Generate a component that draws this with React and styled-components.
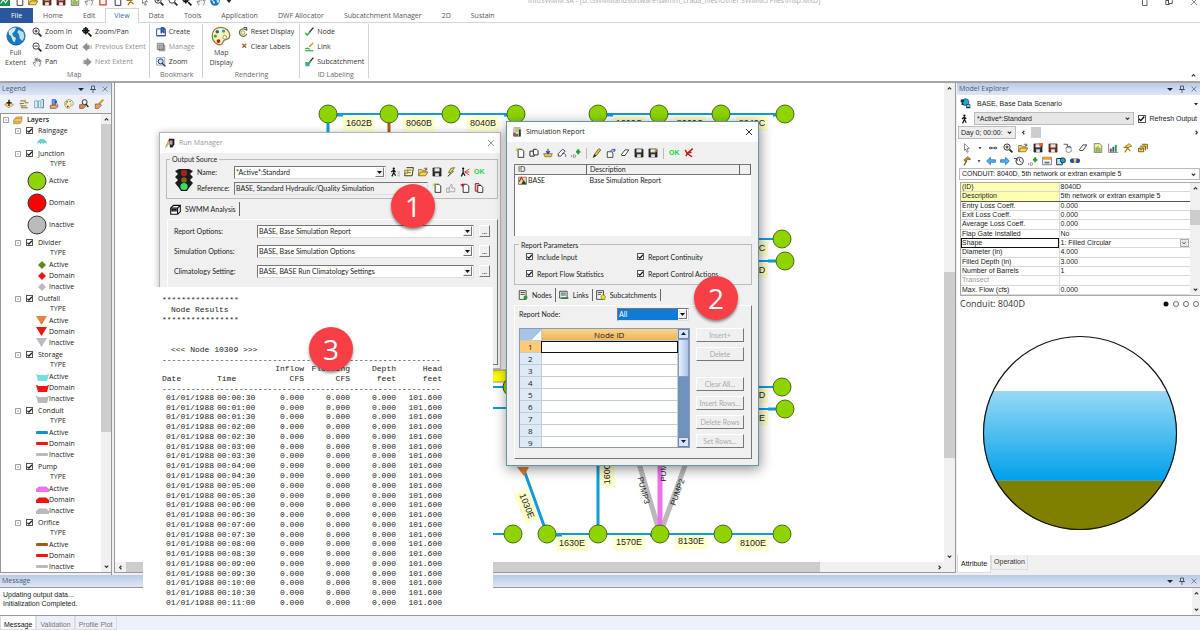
import React from "react";
import styled, { createGlobalStyle, css } from "styled-components";

const ui = '"Open Sans", "Noto Sans", sans-serif';
const arial = '"Liberation Sans", Arial, sans-serif';
const dialog = '"Lato", "Liberation Sans", sans-serif';
const mono = '"Liberation Mono", "DejaVu Sans Mono", monospace';

const Global = createGlobalStyle`
  * { box-sizing: border-box; }
  html, body { margin: 0; height: 100%; background: #fff; overflow: hidden; }
  body { font-family: ${ui}; font-size: 7px; line-height: 10px; color: #222; }
  button, select, input { font: inherit; color: inherit; margin: 0; padding: 0; border-radius: 0; }
  button { background: none; border: 0; white-space: nowrap; }
  svg { display: block; flex: none; }
  fieldset { margin: 0; min-width: 0; }
`;

/* ---------- icons, drawn on a 16 x 16 grid ---------- */
const sheet = <path d="M5 2h6l3 3v10H5z" fill="#fff" stroke="#222" strokeWidth="1.4" />;
const lens = (
  <>
    <circle cx="6.5" cy="6.5" r="5" fill="#fff" stroke="#333" strokeWidth="1.5" />
    <path d="M10.5 10.5 15 15" stroke="#222" strokeWidth="2.6" />
  </>
);
const disk = (
  <>
    <path d="M1.5 1.5h12l1 1v12h-13z" fill="#333" stroke="#111" />
    <path d="M4 2h8v5H4z" fill="#e8e8e8" />
    <path d="M5 10h6v5H5z" fill="#ddd" />
  </>
);
const folder = (
  <>
    <path d="M1 14V4h5l1 2h6v3" fill="#f7e07c" stroke="#554a00" />
    <path d="M1 14 4 8h12l-4 6z" fill="#ffd24a" stroke="#554a00" />
    <path d="M9 3c2-2 4-1 5 1m0-3v3h-3" fill="none" stroke="#222" />
  </>
);
const glyphs = {
  addLayer: (
    <>
      <path d="M8 4 15 9 8 14 1 9z" fill="#f8d47a" stroke="#9b7423" />
      <path d="M8 1v10M4 6h8" stroke="#111" strokeWidth="2" />
    </>
  ),
  layerCfg: (
    <>
      <path d="M2 3h7l2 3h4M1 7h7M3 11h9M3 14h11" stroke="#7d6a3c" fill="none" strokeWidth="1.5" />
      <path d="M10 1v6M2 9l5 5" stroke="#d29b1c" strokeWidth="2" />
    </>
  ),
  book: (
    <>
      <path d="M1 3h5v11H1zM7 3h4v11H7z" fill="#dff1f8" stroke="#3d8fae" />
      <path d="M12 1h3v13h-3" fill="none" stroke="#3b6787" strokeWidth="1.4" />
    </>
  ),
  handDoc: (
    <>
      <path d="M5 1h6v8H5z" fill="#6f9ce0" stroke="#254b96" />
      <path d="M2 10h10l2-1v4l-4 2H2z" fill="#e8a877" stroke="#7b3d1a" />
      <path d="m9 3 4 4m0-4L9 7" stroke="#1c2f79" strokeWidth="1.4" />
    </>
  ),
  palette: (
    <>
      <path d="M8 1C3 1 1 4.500 1 8c0 4 3 7 6.500 7 2 0 1.500-2.500 3-3.500C12 10.500 15 11 15 7.500 15 4 12 1 8 1z" fill="#fdf4b9" stroke="#8a7a42" />
      <circle cx="5" cy="4.500" r="1.400" fill="#27639c" />
      <circle cx="10" cy="4" r="1.300" fill="#1f9ad6" />
      <circle cx="3.500" cy="8" r="1.300" fill="#39a845" />
      <circle cx="6" cy="12" r="1.500" fill="#c1121f" />
      <circle cx="11" cy="9" r="1.500" fill="#fff" stroke="#8a7a42" strokeWidth=".6" />
    </>
  ),
  handLens: (
    <>
      <circle cx="9" cy="5" r="4" fill="#eee" stroke="#222" strokeWidth="1.400" />
      <path d="m11 8 4 5" stroke="#222" strokeWidth="2" />
      <path d="M1 9h7l3 2-4 4H1z" fill="#d98d62" stroke="#7b3d1a" />
    </>
  ),
  handPen: (
    <>
      <path d="M15 1 8 8" stroke="#d29b1c" strokeWidth="3" />
      <path d="M2 8h8l2 2-5 5H2z" fill="#e3a06e" stroke="#7b3d1a" />
    </>
  ),
  globe: (
    <>
      <circle cx="8" cy="8" r="7.300" fill="#1b78bf" stroke="#0c4f87" strokeWidth=".5" />
      <path d="M2 4c2-2 4-3 6-2.500L7 4l-2 2 .500 2L8 9.500 7 13l-1.500-1L4 8 2.500 7z" fill="#cfeaf7" />
      <path d="m10 3 4 2 .600 4L13 12l-2-2-.500-3-1.500-2z" fill="#b6dff2" />
    </>
  ),
  zoomIn: (
    <>
      {lens}
      <path d="M6.500 4v5M4 6.500h5" stroke="#222" strokeWidth="1.500" />
    </>
  ),
  zoomOut: (
    <>
      {lens}
      <path d="M4 6.500h5" stroke="#222" strokeWidth="1.500" />
    </>
  ),
  lens,
  pan: <path d="M5 15 1.500 9l1.500-1 2 2V3l1.500-.500L7 7l.500-5 1.500 0 .300 5L11 3l1.300.500L12 8l1.500-3 1.200.600L13 12l-1 3" fill="#f4f4f4" stroke="#555" />,
  zoomPan: (
    <>
      <path d="M6 0v12M0 6h12" stroke="#111" strokeWidth="2.600" />
      <path d="M3 3h6v6H3z" fill="none" stroke="#111" strokeWidth="1.800" />
      <path d="m10 10 5 5" stroke="#111" strokeWidth="2.800" />
    </>
  ),
  prev: <path d="M1 8 8 2v3h3v6H8v3zM12.500 5v6M15 5v6" fill="#8f8f8f" stroke="#8f8f8f" />,
  next: <path d="M15 8 8 2v3H4v6h4v3zM2 5v6" fill="#8f8f8f" stroke="#8f8f8f" />,
  bmCreate: (
    <>
      <path d="M1 3h14v11H1z" fill="#fff" stroke="#24488f" strokeWidth="1.500" />
      <path d="M8 1h5v9l-2.500-2L8 10zM1 14h14" fill="#3c67bd" stroke="#24488f" strokeWidth="1.500" />
    </>
  ),
  bmManage: <path d="M2 2h10v10H2zM5 5h9v9H5zM7 8h5M7 11h5" fill="#c9c9c9" stroke="#777" strokeWidth="1.300" />,
  bmZoom: (
    <>
      <path d="M1 1h13v12H1z" fill="#eef4ff" stroke="#6781b3" />
      <circle cx="7.500" cy="7" r="4" fill="#cfe0fb" stroke="#23324f" strokeWidth="1.500" />
      <path d="m10 10 5 5" stroke="#23324f" strokeWidth="2" />
    </>
  ),
  reset: (
    <>
      <path d="M13 5a6 6 0 1 0 1 6" fill="none" stroke="#6b6b35" strokeWidth="2" />
      <path d="M9 1h5v5" fill="none" stroke="#333" strokeWidth="1.600" />
      <circle cx="8" cy="9" r="3" fill="#fdf0a5" stroke="#8a7a42" />
    </>
  ),
  clear: <path d="m7 3 6 6m0-6-6 6" stroke="#a2551b" strokeWidth="2.200" />,
  lblNode: (
    <>
      <path d="M15 1 8 9" stroke="#222" strokeWidth="2" />
      <path d="m2 9 3 4 5-5" fill="none" stroke="#35b24a" strokeWidth="2.600" />
    </>
  ),
  lblLink: (
    <>
      <path d="M15 1 8 8" stroke="#c69226" strokeWidth="2" />
      <path d="M2 14h13" stroke="#2aa147" strokeWidth="1.800" />
      <path d="m2 11 4-1 3 2" fill="none" stroke="#35b24a" strokeWidth="2" />
    </>
  ),
  lblSub: (
    <>
      <path d="M2 8h7v7H2z" fill="#43b6c4" />
      <path d="M15 1 9 8" stroke="#222" strokeWidth="2" />
      <path d="m3 9 3 3 5-5" fill="none" stroke="#35b24a" strokeWidth="2.400" />
    </>
  ),
  save: disk,
  saveAs: (
    <>
      {disk}
      <path d="m9 1 6 5M15 1 9 6" stroke="#d8aa25" strokeWidth="1.600" />
    </>
  ),
  saveRed: (
    <>
      {disk}
      <path d="M10 0h6v5h-6z" fill="#e2622b" />
    </>
  ),
  saveBrown: (
    <>
      <path d="M1.500 1.500h13v13h-13z" fill="#6f3326" stroke="#3d1a12" />
      <path d="M4 2h8v5H4zM5 10h6v5H5z" fill="#f0e3df" />
    </>
  ),
  folder,
  doc: sheet,
  docNew: (
    <>
      {sheet}
      <path d="M4 0v6M1 3h6M2 1l4 4M6 1 2 5" stroke="#c9b61c" />
    </>
  ),
  docRed: (
    <>
      {sheet}
      <path d="M1 3h6M4 1v5" stroke="#d0021b" strokeWidth="1.800" />
    </>
  ),
  docBlueArrow: (
    <>
      <path d="M2 6h7l2 2v7H2z" fill="#fff" stroke="#222" strokeWidth="1.300" />
      <path d="M8 5c0-3 4-4 6-1m0-3v4h-4" fill="none" stroke="#1a3da8" strokeWidth="1.500" />
    </>
  ),
  copy: (
    <>
      <path d="M1.500 5h7v8h-7z" fill="#fff" stroke="#222" strokeWidth="1.500" />
      <path d="M7 2h5l2.500 2.500V11H7z" fill="#fff" stroke="#222" strokeWidth="1.500" />
    </>
  ),
  docRed2: (
    <>
      <path d="M2 1h6l3 3v9H2z" fill="#f3b3b3" stroke="#a3121f" strokeWidth="1.500" />
      <path d="M6 4h5l3 3v8H6z" fill="#fff" stroke="#222" strokeWidth="1.400" />
    </>
  ),
  stamp: (
    <>
      <path d="M1 9h14l-2 5H3z" fill="#e2c63b" stroke="#6b5b12" />
      <path d="M8 1v7M5 5l3 4 3-4" stroke="#1f3fc0" fill="none" strokeWidth="1.800" />
    </>
  ),
  pencilDoc: (
    <>
      <path d="m2 9 7-7 4 3-7 8H2z" fill="#fff" stroke="#222" strokeWidth="1.300" />
      <path d="M8 9c4-1 6 0 6 5" stroke="#3553c6" fill="none" strokeWidth="1.600" />
    </>
  ),
  idPlus: (
    <>
      <path d="M1 11v4M4 11v4h2q1.500 0 1.500-2T6 11z" fill="none" stroke="#666" />
      <path d="M11.500 2v8M8 6h7" stroke="#1d9c2d" strokeWidth="3" />
    </>
  ),
  pencil: (
    <>
      <path d="m2 15 2-5 7-9 3 2-7 9z" fill="#f2ca2a" stroke="#222" />
      <path d="m2 15 2-5 3 2z" fill="#222" />
    </>
  ),
  eraser: <path d="m2 11 6-8h6l-6 9H3z" fill="#fff" stroke="#222" strokeWidth="1.300" />,
  redArrow: <path d="M14 1 5 9M2 3l3 6 8 5M3 13l3-5 6-1" fill="none" stroke="#d40d0d" strokeWidth="2.200" />,
  walk: (
    <>
      <circle cx="7" cy="2.500" r="1.800" fill="#111" />
      <path d="M7 4v5l-3 6M7 9l3 5M3 8l4-3 3 3" fill="none" stroke="#111" strokeWidth="1.900" />
    </>
  ),
  walkLines: (
    <>
      <circle cx="6" cy="2.500" r="1.800" fill="#111" />
      <path d="M6 4v5l-3 6M6 9l3 5M2 8l4-3 3 3" fill="none" stroke="#111" strokeWidth="1.900" />
      <path d="M12 8h4M12 11h4M12 14h4" stroke="#888" />
    </>
  ),
  walkRed: (
    <>
      <circle cx="5" cy="2.500" r="1.800" fill="#111" />
      <path d="M5 4v5l-3 6M5 9l3 5" fill="none" stroke="#111" strokeWidth="1.900" />
      <path d="m15 3-7 5 7 5M7 8h8" fill="none" stroke="#d02020" strokeWidth="1.300" />
    </>
  ),
  docBolt: (
    <>
      <path d="M4 1h11l-2 13H1l1-6" fill="#fff7b0" stroke="#222" strokeWidth="1.400" />
      <path d="M5 5h7M4 9h7" stroke="#222" />
      <path d="M1 5h5v5H1z" fill="#e9dd59" stroke="#555" />
    </>
  ),
  bolt: <path d="M14 1 8 2 4 9h4l-5 6 9-8H9z" fill="#f4ea2a" stroke="#333" />,
  thumb: <path d="M1 8h4v7H1zM5 9l3-7 2 1-1 5h5v6H5" fill="#eee" stroke="#999" strokeWidth="1.200" />,
  cards: <path d="M1 6h10v9H1zM1 6l4-4h10l-4 4M11 15l4-4V2M3 8h6v2H3z" fill="#fff" stroke="#111" strokeWidth="1.600" />,
  tabNode: (
    <>
      <path d="M2 1h11v14H2zM4 4h7M4 7h7" fill="#eef5ee" stroke="#333" strokeWidth="1.300" />
      <circle cx="12" cy="12" r="3.200" fill="#2b9c34" />
    </>
  ),
  tabLink: (
    <>
      <path d="M1 2h12v11H1zM3 5h8M3 8h8" fill="#eaf0f5" stroke="#333" strokeWidth="1.300" />
      <path d="M4 13h11" stroke="#247c2c" strokeWidth="2.500" />
    </>
  ),
  tabSub: (
    <>
      <path d="M1 1h11v14H1zM3 4h7M3 7h5" fill="#f1f1f1" stroke="#333" strokeWidth="1.300" />
      <path d="m11 7 4 3-1 5H9l-1-5z" fill="#f4e321" stroke="#66600b" />
    </>
  ),
  report: (
    <>
      <path d="M3 1h10v14H3z" fill="#dfe9a8" stroke="#888" />
      <path d="M5 3h6M5 5h6M5 7h4" stroke="#889" />
      <path d="M2 9h4v6H2z" fill="#a23b7c" />
      <path d="M6 11h4v4H6z" fill="#2d8a35" />
      <path d="M11 4h3v11h-3z" fill="#2c3d1c" />
    </>
  ),
  runner: (
    <>
      <path d="M1 15 6 3l1 5z" fill="#f2e533" stroke="#8a7f14" />
      <path d="M6 1h9v9l-3 5H8z" fill="#222" />
      <path d="M7 4h5v6l-2 1-3-2z" fill="#c593c8" />
    </>
  ),
  base: (
    <>
      <path d="M1 2h14v13H1z" fill="#e8d9a5" stroke="#333" />
      <path d="M2 10 6 3l3 5" fill="none" stroke="#c8291c" strokeWidth="2" />
      <path d="m6 14 4-7 5 7z" fill="#2c4425" />
    </>
  ),
  world: (
    <>
      <circle cx="8" cy="6" r="5" fill="#29a3cf" stroke="#144e6b" />
      <path d="M1 2h5v4H1zM3 5l-1 5h4zM9 9h6v6H9z" fill="#123247" />
      <path d="M10 10h4v3h-4z" fill="#7fd3f0" />
    </>
  ),
  pointer: <path d="m4 1 8 8H8l2 5-2 1-2-5-2 2z" fill="#fff" stroke="#444" />,
  chain: <path d="M1.500 8a3 3 0 0 1 5 0 3 3 0 0 1-5 0zM9.500 8a3 3 0 0 1 5 0 3 3 0 0 1-5 0zM6 8h4" fill="none" stroke="#333" strokeWidth="1.600" />,
  cylinder: (
    <>
      <path d="M5 7h8v7q-4 2-8 0z" fill="#fff" stroke="#555" />
      <path d="M1 2h6v4M7 6q3-2 6 1" fill="none" stroke="#333" strokeWidth="1.300" />
    </>
  ),
  sheetChart: (
    <>
      <path d="M2 1h9l3 3v11H2z" fill="#f8f0a3" stroke="#444" />
      <path d="M5 7v7M8 5v9M11 8v6" stroke="#3b8d3a" strokeWidth="1.600" />
    </>
  ),
  bars: (
    <>
      <path d="M1 1v14h15" stroke="#444" fill="none" />
      <path d="M3 9h3v5H3z" fill="#c22c2c" />
      <path d="M7 6h3v8H7z" fill="#2a55b8" />
      <path d="M11 3h3v11h-3z" fill="#2e9b3f" />
    </>
  ),
  appMark: (
    <>
      <path d="M0 0h16v16H0z" fill="#1d8f4e" />
      <path d="m1 12 4-6 4 5 5-8" fill="none" stroke="#fff" strokeWidth="1.800" />
    </>
  ),
  hammer: (
    <>
      <path d="m3 6 6-5 5 4-3 1-3-1-3 4z" fill="#b49a42" stroke="#5b4a12" />
      <path d="m8 7-5 8" stroke="#7b5a14" strokeWidth="2" />
    </>
  ),
  hammers: (
    <>
      <path d="m4 5 6-4 4 4-3 1-4 2z" fill="#f0d347" stroke="#5b4a12" />
      <path d="M8 7 3 15M1 7h5l6 6" stroke="#a47412" fill="none" strokeWidth="2" />
    </>
  ),
  cardsGold: <path d="M1 8h8v6H1zM3 5h9v7M6 2h9v8M3 10h4" fill="#f5d84a" stroke="#5b4a12" strokeWidth="1.300" />,
  left: <path d="m1 8 6-6v4h8v4H7v4z" fill="#4cb8f0" stroke="#14508a" />,
  right: <path d="m15 8-6-6v4H1v4h8v4z" fill="#4cb8f0" stroke="#14508a" />,
  clock: (
    <>
      <circle cx="9" cy="8" r="6" fill="#fff" stroke="#333" strokeWidth="1.500" />
      <path d="M9 4v4l3 2M0 4h5v4" fill="none" stroke="#333" strokeWidth="1.400" />
    </>
  ),
  win: (
    <>
      <path d="M1 2h14v12H1z" fill="#fff" stroke="#334" />
      <path d="M1 2h14v4H1z" fill="#f09a2a" />
      <path d="M4 9h8v3H4z" fill="#4377bb" />
    </>
  ),
  winGear: (
    <>
      <path d="M1 4h9v10H1z" fill="#bfe2f2" stroke="#123" strokeWidth="1.400" />
      <circle cx="11" cy="7" r="4" fill="#29a3cf" stroke="#123" strokeWidth="1.400" />
    </>
  ),
  pill: (
    <>
      <rect x="0" y="4" width="16" height="7" rx="3" fill="#2448b6" />
      <path d="M6 4h4v7H6z" fill="#f4d02a" />
    </>
  ),
  layers: (
    <>
      <path d="M3 6h10l2-3H6z" fill="#f8de92" stroke="#9a7423" />
      <path d="M1 14h10l3-4V5H4L1 8z" fill="#f3c55c" stroke="#9a7423" />
      <path d="M2 11h10" stroke="#9a7423" />
    </>
  ),
  caret: <path d="M4 6h8l-4 5z" fill="#222" />,
  redSheet: <path d="M3 1h10v13H3z" fill="#fff" stroke="#d33" strokeWidth="2" />,
};
const Icon = ({ name, size = 10 }) => (
  <svg width={size} height={size} viewBox="0 0 16 16" aria-hidden="true">
    {glyphs[name]}
  </svg>
);
const Chevron = ({ dir = "down", size = 7 }) => {
  const d = { down: "M2 3l2 2 2-2", up: "M2 5l2-2 2 2", left: "M5 2 3 4l2 2", right: "M3 2l2 2-2 2" }[dir];
  return (
    <svg width={size} height={size} viewBox="0 0 8 8" aria-hidden="true">
      <path d={d} fill="none" stroke="#333" strokeWidth="1.300" />
    </svg>
  );
};

/* ---------- frame ---------- */
const Page = styled.div`
  position: relative;
  display: flex;
  flex-direction: column;
  height: 100vh;
  overflow: hidden;
`;
const TitleBar = styled.header`
  display: flex;
  align-items: flex-end;
  flex: none;
  height: 6px;
  overflow: hidden;
  color: #aaa;
`;
const QuickAccess = styled.div`
  display: flex;
  gap: 4px;
  width: 44%;
`;
const WindowName = styled.div`
  flex: 1;
  white-space: nowrap;
  line-height: 10px;
`;
const WindowKeys = styled.div`
  display: flex;
  gap: 17px;
  padding-right: 2px;
`;
const TabBar = styled.nav`
  display: flex;
  flex: none;
  height: 17px;
  padding-top: 2px;
  border-bottom: 1px solid #d5d5d5;
`;
const RibbonTab = styled.button`
  height: 15px;
  padding: 0 10px;
  color: #555;
  ${(p) => p.$file && css`background: #2a579a; color: #fff; padding: 0 11px;`}
  ${(p) => p.$active && css`color: #2b6cb5; background: #fff; border: 1px solid #d5d5d5; border-bottom: 0; padding: 0 8px;`}
`;
const Ribbon = styled.section`
  display: flex;
  flex: none;
  height: 60px;
  border-bottom: 2px solid #a5a5a5;
`;
const Group = styled.div`
  display: flex;
  flex-direction: column;
  flex: none;
  border-right: 1px solid #cdd4dd;
  margin: 1px 0 3px;
  padding: ${(p) => p.$pad || "0"};
`;
const GroupBody = styled.div`
  display: flex;
  flex: none;
  gap: 1px;
  height: 46px;
`;
const GroupName = styled.div`
  text-align: center;
  color: #6a6a6a;
  line-height: 9px;
`;
const BigButton = styled.button`
  display: flex;
  flex-direction: column;
  align-items: center;
  width: 31px;
  padding-top: 2px;
  gap: 2px;
  line-height: 10px;
  color: #444;
`;
const Stack = styled.div`
  display: flex;
  flex-direction: column;
`;
const RibbonStack = styled(Stack)`
  padding-right: 3px;
`;
const SmallButton = styled.button`
  display: flex;
  align-items: center;
  gap: 3px;
  height: 15px;
  color: ${(p) => (p.disabled ? "#909090" : "#333")};
`;
const RibbonEnd = styled.div`
  display: flex;
  flex: 1;
  align-items: flex-end;
  justify-content: flex-end;
  padding: 0 3px 2px 0;
`;
const Main = styled.main`
  display: flex;
  flex: 1;
  min-height: 0;
  background: #f0f0f0;
`;

/* ---------- docked panes ---------- */
const PaneHead = styled.div`
  display: flex;
  align-items: center;
  flex: none;
  height: 12px;
  padding: 0 2px;
  font-family: ${ui};
  color: #4a5a70;
  background: linear-gradient(#b9cae6, #dfe7f5);
`;
const PaneTitle = styled.span`
  flex: 1;
`;
const PaneKeys = styled.span`
  display: flex;
  gap: 4px;
`;
const PinKeys = () => (
  <PaneKeys>
    <svg width="8" height="8" viewBox="0 0 8 8"><path d="M1 3h6L4 6z" fill="#223" /></svg>
    <svg width="8" height="8" viewBox="0 0 8 8"><path d="M2.500 1h3v3.500h-3zM1 4.500h6M4 5v3" fill="none" stroke="#345" strokeWidth=".8" /></svg>
    <svg width="8" height="8" viewBox="0 0 8 8"><path d="m1.500 1.500 5 5m0-5-5 5" stroke="#789" /></svg>
  </PaneKeys>
);
const Legend = styled.aside`
  display: flex;
  flex-direction: column;
  flex: none;
  width: 112px;
  border-right: 1px solid #999;
`;
const LegendTools = styled.div`
  display: flex;
  align-items: center;
  flex: none;
  gap: 5px;
  height: 18px;
  padding-left: 4px;
  background: #eef1f8;
`;
const TreeWrap = styled.div`
  display: flex;
  flex: 1;
  min-height: 0;
  margin-bottom: 2px;
  background: #fff;
  border: 1px solid #999;
  border-right: 0;
`;
const Tree = styled.ul`
  flex: 1;
  margin: 0;
  padding: 0;
  list-style: none;
  overflow: hidden;
  color: #222;
`;
const TreeGroup = styled.li`
  padding-bottom: ${(p) => (p.$root ? 0 : 1)}px;
`;
const TreeRow = styled.label`
  display: flex;
  align-items: center;
  height: 11px;
  padding-left: ${(p) => (p.$root ? 2 : 14)}px;
  gap: ${(p) => (p.$root ? 4 : 5)}px;
  font-weight: ${(p) => (p.$root ? 600 : 400)};
`;
const TypeRow = styled.div`
  height: 11px;
  padding-left: 49px;
`;
const ItemRow = styled.div`
  display: flex;
  align-items: center;
  height: ${(p) => (p.$tall ? 22 : 11)}px;
`;
const Swatch = styled.span`
  display: flex;
  justify-content: ${(p) => (p.$tall ? "flex-end" : "center")};
  flex: none;
  width: ${(p) => (p.$tall ? 46 : 34)}px;
  margin-left: ${(p) => (p.$tall ? 0 : 24)}px;
  margin-right: ${(p) => (p.$tall ? 2 : -10)}px;
`;
const Minus = () => (
  <svg width="6" height="6" viewBox="0 0 6 6">
    <path d="M.5.500h5v5h-5zM2 3h2" fill="#fff" stroke="#888" strokeWidth=".8" />
  </svg>
);
const Tick = styled.input.attrs({ type: "checkbox" })`
  appearance: none;
  flex: none;
  display: block;
  width: ${(p) => p.$s || 7}px;
  height: ${(p) => p.$s || 7}px;
  border: 1px solid #555;
  background: #fff;
  &:checked::before {
    content: "";
    display: block;
    width: 100%;
    height: 100%;
    background: #111;
    clip-path: polygon(8% 45%, 38% 66%, 92% 5%, 100% 35%, 38% 100%, 5% 72%);
  }
`;
const VBar = styled.div`
  display: flex;
  flex-direction: column;
  align-items: center;
  flex: none;
  width: ${(p) => p.$w || 10}px;
  background: #f0f0f0;
  padding: 2px 0;
`;
const VThumb = styled.div`
  width: 100%;
  margin-top: ${(p) => p.$top || 0}px;
  height: ${(p) => p.$len}px;
  background: #cdcdcd;
`;
const Fill = styled.div`
  flex: 1;
`;

/* ---------- map ---------- */
const MapPane = styled.section`
  display: flex;
  flex-direction: column;
  flex: 1;
  min-width: 0;
  margin: 0 1px 2px 2px;
  border: 1px solid #999;
  border-top: 0;
  background: #fff;
`;
const MapBody = styled.div`
  display: flex;
  flex: 1;
  min-height: 0;
`;
const Canvas = styled.div`
  flex: 1;
  min-width: 0;
  overflow: hidden;
`;
const HBar = styled.div`
  display: flex;
  align-items: center;
  flex: none;
  height: 10px;
  padding: 0 12px 0 2px;
  gap: 2px;
  background: #f0f0f0;
`;
const HThumb = styled.div`
  flex: none;
  height: ${(p) => p.$h || "100%"};
  width: ${(p) => p.$w};
  background: #cdcdcd;
`;

/* ---------- model explorer ---------- */
const Explorer = styled.aside`
  display: flex;
  flex-direction: column;
  flex: none;
  width: 243px;
  background: #fff;
  font-family: ${arial};
`;
const ExpRow = styled.div`
  display: flex;
  align-items: center;
  flex: none;
  gap: ${(p) => p.$gap || 0}px;
  height: ${(p) => p.$h || 14}px;
  padding: 0 ${(p) => p.$pr || 0}px 0 ${(p) => p.$pl || 3}px;
`;
const Combo = styled.span`
  position: relative;
  display: block;
  flex: ${(p) => (p.$w ? "none" : 1)};
  width: ${(p) => (p.$w ? p.$w + "px" : "auto")};
  height: ${(p) => p.$h || 13}px;
  svg {
    position: absolute;
    right: 3px;
    top: 3px;
    pointer-events: none;
  }
`;
const Select = styled.select`
  appearance: none;
  display: block;
  width: 100%;
  height: 100%;
  padding: 0 11px 0 2px;
  border: 1px solid #bbb;
  background: ${(p) => p.$bg || "#fff"};
  outline: none;
`;
const CheckLabel = styled.label`
  display: flex;
  align-items: center;
  gap: 4px;
  white-space: nowrap;
`;
const PropWrap = styled.div`
  display: flex;
  flex: none;
  margin: 1px 0 0 3px;
  border: 1px solid #aaa;
  border-width: 1px 0 1px 1px;
`;
const Props = styled.table`
  flex: 1;
  height: 112px;
  border-collapse: collapse;
  table-layout: fixed;
  color: #222;
  line-height: 8px;
  th, td {
    padding: 0 1px;
    border: 1px solid #d9d9d9;
    border-width: 0 0 1px 0;
    text-align: left;
    font-weight: 400;
    white-space: nowrap;
  }
  th { width: 98px; border-right-width: 1px; }
  tr.key th { background: #ffffb0; }
  tr.last th, tr.last td { border-bottom-color: #555; }
  tr.pick th { outline: 1px solid #111; outline-offset: -1px; }
  tr.off th { color: #999; }
`;
const CellFlex = styled.div`
  display: flex;
  justify-content: space-between;
  align-items: center;
`;
const CellDrop = styled.button`
  width: 9px;
  height: 8px;
  border: 1px solid #aaa;
  background: #e8e8e8;
`;
const Section = styled.div`
  display: flex;
  justify-content: space-between;
  align-items: center;
  flex: none;
  height: 16px;
  padding: 0 0 0 3px;
  font: 9px/14px ${ui};
  color: #333;
`;
const Drawing = styled.div`
  display: flex;
  flex: 1;
  min-height: 0;
  justify-content: center;
  align-items: center;
  padding: 0 0 1px 3px;
`;
const PaneTabs = styled.div`
  display: flex;
  flex: none;
  height: ${(p) => p.$h}px;
  background: ${(p) => p.$bg};
`;
const PaneTab = styled.button`
  height: ${(p) => p.$h || 18}px;
  padding: 0 ${(p) => p.$pad || 3}px;
  font-family: ${arial};
  border: 1px solid #ddd;
  border-top: 0;
  background: ${(p) => (p.$on ? "#fff" : "transparent")};
  color: ${(p) => (p.$on ? "#111" : p.$dim ? "#777" : "#333")};
`;

/* ---------- message pane ---------- */
const Message = styled.section`
  display: flex;
  flex-direction: column;
  flex: none;
  font-family: ${arial};
`;
const Log = styled.div`
  display: flex;
  justify-content: space-between;
  height: 29px;
  padding-left: 3px;
  border-top: 1px solid #999;
  border-bottom: 1px solid #999;
  line-height: 9px;
  background: #fff;
`;
const LogText = styled.p`
  margin: 0;
  padding-top: 2px;
`;
const LogTabs = styled(PaneTabs)`
  height: 14px;
  overflow: hidden;
  ${PaneTab} { height: 14px; padding-top: 5px; line-height: 8px; }
`;

/* ---------- floating windows ---------- */
const Window = styled.section`
  position: absolute;
  left: ${(p) => p.$x}px;
  top: ${(p) => p.$y}px;
  width: ${(p) => p.$w}px;
  border: 1px solid ${(p) => (p.$front ? "#5f96a8" : "#b5b5b5")};
  background: #f0f0f0;
  box-shadow: ${(p) => (p.$front ? "1px 3px 12px rgba(0,0,0,.45)" : "0 1px 7px rgba(0,0,0,.3)")};
  font-family: ${dialog};
  font-size: 7px;
  color: #222;
`;
const Caption = styled.header`
  display: flex;
  align-items: center;
  gap: 4px;
  height: 20px;
  padding: 0 5px;
  background: #fff;
  font: 7px/10px ${ui};
  color: ${(p) => (p.$dim ? "#999" : "#222")};
`;
const CloseKey = styled.button`
  margin-left: auto;
`;
const Cross = ({ c = "#333" }) => (
  <svg width="8" height="8" viewBox="0 0 8 8"><path d="m1 1 6 6m0-6-6 6" stroke={c} fill="none" /></svg>
);
const Frame = styled.fieldset`
  border: 1px solid #bbb;
  padding: ${(p) => p.$pad};
  margin: ${(p) => p.$m};
  legend { padding: 0 2px; margin-left: 3px; line-height: 8px; }
`;
const FrameRun = styled(Frame)`
  legend { margin-left: -5px; }
`;
const FrameParams = styled(Frame)`
  legend { margin-left: -7px; }
`;
const Sunken = css`
  border: 1px solid #777;
  border-right-color: #ddd;
  border-bottom-color: #ddd;
`;
const FormRow = styled.div`
  display: flex;
  align-items: center;
  height: ${(p) => p.$h || 16}px;
`;
const FieldLabel = styled.label`
  flex: none;
  width: ${(p) => p.$w}px;
  padding-left: ${(p) => p.$pl || 0}px;
  white-space: nowrap;
`;
const Drop = styled.span`
  display: flex;
  align-items: center;
  flex: none;
  width: ${(p) => p.$w}px;
  height: 13px;
  padding-right: 1px;
  background: #fff;
  ${Sunken}
`;
const DropSelect = styled.select`
  appearance: none;
  flex: 1;
  min-width: 0;
  height: 11px;
  padding: 0 1px;
  border: 0;
  outline: none;
  line-height: 10px;
  background: ${(p) => (p.$hot ? "#0f7bd6" : "#fff")};
  color: ${(p) => (p.$hot ? "#fff" : "#222")};
`;
const Raised = css`
  background: #f0f0f0;
  border: 1px solid #777;
  border-top-color: #fff;
  border-left-color: #fff;
`;
const DropKey = styled.span`
  display: flex;
  align-items: center;
  justify-content: center;
  width: 9px;
  height: 10px;
  pointer-events: none;
  ${Raised}
`;
const Down = () => (
  <DropKey>
    <svg width="5" height="3" viewBox="0 0 5 3"><path d="M0 0h5L2.500 3z" fill="#111" /></svg>
  </DropKey>
);
const ReadOnly = styled.input`
  flex: none;
  width: 194px;
  height: 13px;
  padding: 0 1px;
  background: #f0f0f0;
  ${Sunken}
`;
const Tools = styled.div`
  display: flex;
  align-items: center;
  gap: 4px;
  padding-left: ${(p) => p.$pl || 0}px;
  height: ${(p) => p.$h || "auto"};
`;
const Ok = styled.button`
  color: #16d93a;
  font: bold 7px/10px ${arial};
`;
const Split = styled.span`
  width: 1px;
  height: 11px;
  background: #bbb;
  margin: 0 1px;
`;
const Dots = styled.button`
  width: 11px;
  height: 12px;
  margin-left: 5px;
  line-height: 6px;
  ${Raised}
`;
const SheetTabs = styled.div`
  display: flex;
  align-items: center;
  height: 20px;
  margin-left: ${(p) => p.$ml || 0}px;
`;
const SheetTab = styled.button`
  display: flex;
  align-items: center;
  gap: 4px;
  height: ${(p) => (p.$on ? 14 : 12)}px;
  padding: 0 3px;
  border-right: 1px solid #666;
`;
const Sheet = styled.div`
  border: 1px solid #fff;
  border-right-color: #777;
  border-bottom-color: #777;
  margin: ${(p) => p.$m};
  padding: ${(p) => p.$pad};
  height: ${(p) => p.$h}px;
`;
const ListTable = styled.table`
  width: 237px;
  margin: 0 7px;
  background: #fff;
  border-collapse: collapse;
  border-left: 1px solid #777;
  border-top: 1px solid #777;
  th, td { text-align: left; font-weight: 400; padding: 0 3px; line-height: 9px; }
  th { background: #f0f0f0; border-right: 1px solid #666; border-bottom: 1px solid #777; }
  td { vertical-align: top; height: 61px; padding-top: 1px; }
`;
const IdCell = styled.span`
  display: flex;
  align-items: center;
  gap: 1px;
`;
const Checks = styled.div`
  display: grid;
  grid-template-columns: 111px 1fr;
  row-gap: 7px;
`;
const GridArea = styled.div`
  display: flex;
  gap: 6px;
  margin-top: 6px;
`;
const GridFrame = styled.div`
  display: flex;
  flex: none;
  width: 171px;
  height: 120px;
  border: 1px solid #8a9bb0;
  overflow: hidden;
`;
const NodeTable = styled.table`
  flex: 1;
  border-collapse: collapse;
  background: #fff;
  font: 8px/11px ${ui};
  th, td { height: 12px; padding: 0; border: 1px solid #c3cdd8; border-left: 0; border-top: 0; }
  th { width: 21px; font-weight: 400; background: #dde9f7; }
  th.head { width: auto; background: linear-gradient(#fbd48c, #edb457); }
  th.corner { background: linear-gradient(135deg, #a9c3e4 70%, #fff 70%); }
  th.now { background: #fbcb76; }
  td.now { outline: 1px solid #111; outline-offset: -1px; }
`;
const BlueBar = styled.div`
  display: flex;
  flex-direction: column;
  width: 11px;
  background: #6f93bd;
`;
const BlueKey = styled.button`
  display: flex;
  align-items: center;
  justify-content: center;
  height: 10px;
  background: #d6e4f5;
  border: 1px solid #6a87b0;
`;
const BlueThumb = styled.div`
  height: 38px;
  background: linear-gradient(90deg, #e8f1fc, #a8c3e6);
  border: 1px solid #7d9cc4;
`;
const SideKeys = styled.div`
  display: flex;
  flex-direction: column;
  gap: 5px;
`;
const SideKey = styled.button`
  width: 48px;
  height: 14px;
  line-height: 10px;
  margin-top: ${(p) => p.$mt || 0}px;
  ${Raised}
  color: #aaa;
`;

/* ---------- report sheet ---------- */
const Paper = styled.section`
  position: absolute;
  left: 143px;
  top: 287px;
  width: 350px;
  height: 328px;
  padding: 8px 51px 0 19px;
  background: #fff;
  font: 8px/10px ${mono};
  color: #222;
`;
const Line = styled.div`
  height: ${(p) => p.$h || 10}px;
  padding-left: ${(p) => p.$in || 0}px;
  white-space: pre;
`;
const Results = styled.table`
  width: 100%;
  height: ${(p) => p.$h}px;
  table-layout: fixed;
  border-collapse: collapse;
  th, td { padding: 0; text-align: right; font-weight: 400; white-space: nowrap; line-height: 8px; }
  th:nth-child(1), td:nth-child(1) { width: 55px; text-align: left; }
  th:nth-child(2), td:nth-child(2) { width: 41px; text-align: left; }
  td:nth-child(1) { padding-left: 4px; }
`;
const Badge = styled.div`
  position: absolute;
  left: ${(p) => p.$x}px;
  top: ${(p) => p.$y}px;
  display: flex;
  align-items: center;
  justify-content: center;
  width: 44px;
  height: 44px;
  border-radius: 50%;
  background: #f93f46;
  color: #fff;
  font: 28px/40px ${ui};
  box-shadow: 0 2px 3px rgba(0, 0, 0, 0.45);
`;

/* ---------- data ---------- */
const swatches = {
  dia: (c) => <svg width="8" height="8" viewBox="0 0 8 8"><path d="m4 0 4 4-4 4-4-4z" fill={c} /></svg>,
  tri: (c) => <svg width="12" height="9" viewBox="0 0 12 9"><path d="M0 0h11L5.500 9z" fill={c} /></svg>,
  tub: (c) => <svg width="13" height="8" viewBox="0 0 13 8"><path d="M0 1h1l1 1h9l1-1h1l-2 7H2z" fill={c} /></svg>,
  line: (c) => <svg width="12" height="4" viewBox="0 0 12 4"><rect width="12" height="3" rx="1" fill={c} /></svg>,
  pump: (c) => <svg width="13" height="6" viewBox="0 0 13 6"><path d="M0 6V3l3-2.500h7L13 3v3z" fill={c} /></svg>,
  dot: (c) => <svg width="20" height="20" viewBox="0 0 20 20"><circle cx="10" cy="10" r="9" fill={c} stroke="#333" /></svg>,
};
const legendGroups = [
  ["Junction", "dot", ["#8fd400", "#f00", "#bababa"]],
  ["Divider", "dia", ["#5f8a1d", "#f01414", "#bababa"]],
  ["Outfall", "tri", ["#e8843a", "#f01414", "#b9bcc4"]],
  ["Storage", "tub", ["#74e0e0", "#f01414", "#bababa"]],
  ["Conduit", "line", ["#1090d0", "#f01414", "#bababa"]],
  ["Pump", "pump", ["#ee72ee", "#f01414", "#bababa"]],
  ["Orifice", "line", ["#a8561c", "#f01414", "#bababa"]],
];
const states = ["Active", "Domain", "Inactive"];
const props = [
  ["(ID)", "8040D", "key"],
  ["Description", "5th network or extran example 5", "key last"],
  ["Entry Loss Coeff.", "0.000"],
  ["Exit Loss Coeff.", "0.000"],
  ["Average Loss Coeff.", "0.000"],
  ["Flap Gate Installed", "No"],
  ["Shape", "1: Filled Circular", "pick"],
  ["Diameter (in)", "4.000"],
  ["Filled Depth (in)", "3.000"],
  ["Number of Barrels", "1"],
  ["Transect", "", "off"],
  ["Max. Flow (cfs)", "0.000"],
];
const times = Array.from({ length: 22 }, (_, i) => {
  const s = (i + 1) * 30;
  return `00:${String(Math.floor(s / 60)).padStart(2, "0")}:${s % 60 ? "30" : "00"}`;
});
const rule = "-".repeat(58);
const pipe = "#129bdb";
const nodes = [
  [328, 114], [389, 114], [451, 114], [516, 114], [598, 114], [659, 114], [721, 114], [785, 114],
  [782, 239], [785, 261], [782, 387], [785, 409],
  [513, 534], [547, 534], [598, 534], [660, 534], [723, 534], [782, 534],
];
const tags = [
  ["1602B", 359, 123], ["8060B", 419, 123], ["8040B", 483, 123],
  ["1600C", 629, 123], ["8060C", 690, 123], ["8040C", 752, 123],
  ["1500C", 752, 248], ["8070D", 752, 270], ["8100D", 752, 395], ["8130E", 752, 418],
  ["1630E", 572, 543], ["1570E", 629, 542], ["8130E", 691, 541], ["8100E", 753, 543],
  ["1030E", 527, 506, 68], ["1600C", 607, 471, -90],
];

const MapDrawing = () => (
  <svg width="828" height="478" viewBox="115 83 828 478" fontFamily={arial} fontSize="9">
    {tags.map(([t, x, y, r]) => (
      <path key={t + x + y} transform={`translate(${x} ${y}) rotate(${r || 0})`} d="M-16-7h32V8h-32z" fill="#ffffc9" />
    ))}
    <g stroke={pipe} strokeWidth="2" fill="none">
      <path d="M328 114h188M598 114h187M700 239h82M700 261h85M700 387h82M700 409h85M480 387h40M480 408h40M490 534h23M547 534h235" />
      <path d="M337 115h6m38 0h16m45 0h18m44 0h8M607 115h6m38 0h16m46 0h16m44 0h8M778 261h-10M768 409h10M556 535h6m28 0h16m44 0h18m46 0h17m43 0h8" strokeWidth="3" />
      <path d="m524 470 23 64M598 460v74" strokeWidth="3" />
      <path d="M328 114v60" strokeWidth="3" />
    </g>
    <path d="M389 114v60" stroke="#b4531a" strokeWidth="3" />
    <path d="m638 460 22 74 27-74" fill="none" stroke="#b9b9b9" strokeWidth="5" />
    <path d="M660 460v74" stroke="#ee72ee" strokeWidth="5" />
    <path d="M480 370h26v12h-26z" fill="#ffff00" stroke="#997" />
    <circle cx="512" cy="387" r="9" fill="#8fd400" stroke="#444" />
    <path d="M517 467h12l-5 9z" fill="#e07a34" />
    {tags.map(([t, x, y, r]) => (
      <text key={t + x + y} transform={`translate(${x} ${y}) rotate(${r || 0})`} textAnchor="middle" y="3" fill="#222">{t}</text>
    ))}
    <g fontSize="8" fill="#222" textAnchor="middle">
      <text transform="translate(641 491) rotate(75)">PUMP3</text>
      <text transform="translate(666 468) rotate(-90)">PUMP1</text>
      <text transform="translate(680 493) rotate(-70)">PUMP2</text>
    </g>
    {nodes.map(([x, y]) => (
      <circle key={`${x}-${y}`} cx={x} cy={y} r="9" fill="#8fd400" stroke="#4b6a10" />
    ))}
  </svg>
);

const Small = ({ icon, children, disabled }) => (
  <SmallButton disabled={disabled}>
    <Icon name={icon} />
    {children}
  </SmallButton>
);

const ToolIcons = ({ names, size = 10 }) =>
  names.map((n, i) => (
    <button key={n + i} aria-label={n}>
      <Icon name={n} size={size} />
    </button>
  ));

const RibbonArea = () => (
  <>
    <TitleBar>
      <QuickAccess>
        <ToolIcons names={["appMark", "doc", "folder", "saveBrown", "saveBrown", "sheetChart", "pan", "redSheet", "doc", "hammers", "pointer", "zoomIn", "lens", "zoomPan", "pan", "globe", "caret"]} />
      </QuickAccess>
      <WindowName>InfoSWMM SA - [D:\SWMMandSoftware\swmm_crada_files\Other SWMM5 Files\msp.MXD]</WindowName>
      <WindowKeys>
        <Icon name="doc" size={8} />
        <Icon name="copy" size={8} />
        <Cross c="#888" />
      </WindowKeys>
    </TitleBar>
    <TabBar>
      <RibbonTab $file>File</RibbonTab>
      <RibbonTab>Home</RibbonTab>
      <RibbonTab>Edit</RibbonTab>
      <RibbonTab $active>View</RibbonTab>
      {["Data", "Tools", "Application", "DWF Allocator", "Subcatchment Manager", "2D", "Sustain"].map((t) => (
        <RibbonTab key={t}>{t}</RibbonTab>
      ))}
    </TabBar>
    <Ribbon>
      <Group>
        <GroupBody>
          <BigButton>
            <Icon name="globe" size={20} />
            <span>Full<br />Extent</span>
          </BigButton>
          <RibbonStack>
            <Small icon="zoomIn">Zoom In</Small>
            <Small icon="zoomOut">Zoom Out</Small>
            <Small icon="pan">Pan</Small>
          </RibbonStack>
          <RibbonStack>
            <Small icon="zoomPan">Zoom/Pan</Small>
            <Small icon="prev" disabled>Previous Extent</Small>
            <Small icon="next" disabled>Next Extent</Small>
          </RibbonStack>
        </GroupBody>
        <GroupName>Map</GroupName>
      </Group>
      <Group $pad="0 4px 0 6px">
        <GroupBody>
          <RibbonStack>
            <Small icon="bmCreate">Create</Small>
            <Small icon="bmManage" disabled>Manage</Small>
            <Small icon="bmZoom">Zoom</Small>
          </RibbonStack>
        </GroupBody>
        <GroupName>Bookmark</GroupName>
      </Group>
      <Group $pad="0 2px 0 3px">
        <GroupBody>
          <BigButton>
            <Icon name="palette" size={20} />
            <span>Map<br />Display</span>
          </BigButton>
          <RibbonStack>
            <Small icon="reset">Reset Display</Small>
            <Small icon="clear">Clear Labels</Small>
          </RibbonStack>
        </GroupBody>
        <GroupName>Rendering</GroupName>
      </Group>
      <Group $pad="0 1px 0 4px">
        <GroupBody>
          <RibbonStack>
            <Small icon="lblNode">Node</Small>
            <Small icon="lblLink">Link</Small>
            <Small icon="lblSub">Subcatchment</Small>
          </RibbonStack>
        </GroupBody>
        <GroupName>ID Labeling</GroupName>
      </Group>
      <RibbonEnd><Chevron dir="up" /></RibbonEnd>
    </Ribbon>
  </>
);

const LegendPane = () => (
  <Legend>
    <PaneHead>
      <PaneTitle>Legend</PaneTitle>
      <PinKeys />
    </PaneHead>
    <LegendTools>
      <ToolIcons names={["addLayer", "layerCfg", "book", "handDoc", "palette", "handLens", "handPen"]} />
    </LegendTools>
    <TreeWrap>
      <Tree>
        <TreeGroup $root>
          <TreeRow as="div" $root><Minus /><Icon name="layers" />Layers</TreeRow>
        </TreeGroup>
        <TreeGroup>
          <TreeRow><Minus /><Tick defaultChecked />Raingage</TreeRow>
          <ItemRow>
            <Swatch>
              <svg width="10" height="5" viewBox="0 0 10 5"><path d="M0 5a5 5 0 0 1 10 0L8 3.500 6.500 5 5 3.500 3.500 5 2 3.500z" fill="#5fd0d0" /></svg>
            </Swatch>
          </ItemRow>
        </TreeGroup>
        {legendGroups.map(([name, kind, colors]) => (
          <TreeGroup key={name}>
            <TreeRow><Minus /><Tick defaultChecked />{name}</TreeRow>
            <TypeRow>TYPE</TypeRow>
            {colors.map((c, i) => (
              <ItemRow key={c} $tall={kind === "dot"}>
                <Swatch $tall={kind === "dot"}>{swatches[kind](c)}</Swatch>
                {states[i]}
              </ItemRow>
            ))}
          </TreeGroup>
        ))}
      </Tree>
      <VBar>
        <Chevron dir="up" />
        <VThumb $top={1} $len={308} />
        <Fill />
        <Chevron />
      </VBar>
    </TreeWrap>
  </Legend>
);

const MapView = () => (
  <MapPane>
    <MapBody>
      <Canvas><MapDrawing /></Canvas>
      <VBar $w={11}>
        <Chevron dir="up" />
        <VThumb $top={180} $len={186} />
        <Fill />
        <Chevron />
      </VBar>
    </MapBody>
    <HBar>
      <Chevron dir="left" />
      <HThumb $w="84%" />
      <Fill />
      <Chevron dir="right" />
    </HBar>
  </MapPane>
);

const ModelExplorer = () => (
  <Explorer>
    <PaneHead>
      <PaneTitle>Model Explorer</PaneTitle>
      <PinKeys />
    </PaneHead>
    <ExpRow $h={17} $gap={6}>
      <Icon name="world" size={11} />
      <Fill>BASE, Base Data Scenario</Fill>
      <Icon name="caret" size={8} />
    </ExpRow>
    <ExpRow $gap={4} $pr={3} $h={13}>
      <Icon name="walk" />
      <Combo $h={13}>
        <Select $bg="#e6e6e6" aria-label="Output source"><option>*Active*:Standard</option></Select>
        <Chevron />
      </Combo>
      <CheckLabel><Tick defaultChecked $s={8} />Refresh Output</CheckLabel>
    </ExpRow>
    <ExpRow $gap={4} $pl={1} $h={15}>
      <Combo $w={58} $h={13}>
        <Select $bg="#eee" aria-label="Time"><option>Day 0; 00:00:</option></Select>
        <Chevron />
      </Combo>
      <Chevron dir="left" />
      <HThumb $w="10px" $h="11px" />
      <Fill />
      <Chevron dir="right" />
    </ExpRow>
    <ExpRow $h={16} $gap={5} $pl={5}>
      <ToolIcons names={["pointer"]} />
      <ToolIcons size={6} names={["caret"]} />
      <ToolIcons names={["chain", "zoomIn", "folder", "saveRed", "saveBrown", "cylinder", "eraser", "sheetChart", "bars", "hammers", "cardsGold"]} />
    </ExpRow>
    <ExpRow $h={10} $gap={4} $pl={5}>
      <ToolIcons names={["hammer"]} />
      <ToolIcons size={6} names={["caret"]} />
      <ToolIcons names={["left", "right", "clock", "idPlus", "win", "winGear", "pill"]} />
    </ExpRow>
    <ExpRow $h={15} $pl={2}>
      <Combo $h={12}>
        <Select aria-label="Element"><option>CONDUIT: 8040D, 5th network or extran example 5</option></Select>
        <Chevron />
      </Combo>
    </ExpRow>
    <PropWrap>
      <Props>
        <tbody>
          {props.map(([k, v, cls]) => (
            <tr key={k} className={cls}>
              <th scope="row">{k}</th>
              <td>
                {cls === "pick" ? (
                  <CellFlex>{v}<CellDrop aria-label="Choose shape"><Chevron size={6} /></CellDrop></CellFlex>
                ) : v}
              </td>
            </tr>
          ))}
        </tbody>
      </Props>
      <VBar>
        <Chevron dir="up" />
        <VThumb $top={18} $len={15} />
        <Fill />
        <Chevron />
      </VBar>
    </PropWrap>
    <Section>
      Conduit: 8040D
      <svg width="38" height="8" viewBox="0 0 38 8">
        <circle cx="4" cy="4" r="2.500" fill="#111" />
        <g fill="none" stroke="#444" strokeWidth=".8">
          <circle cx="14" cy="4" r="2.500" /><circle cx="24" cy="4" r="2.500" /><circle cx="34" cy="4" r="2.500" />
        </g>
      </svg>
    </Section>
    <Drawing>
      <svg width="196" height="196" viewBox="0 0 196 196">
        <defs>
          <linearGradient id="water" x1="0" y1="0" x2="0" y2="1">
            <stop offset="0" stopColor="#98d9f5" />
            <stop offset="1" stopColor="#00a0ea" />
          </linearGradient>
          <clipPath id="barrel"><circle cx="98" cy="98" r="97" /></clipPath>
        </defs>
        <g clipPath="url(#barrel)">
          <path d="M0 56h196v90H0z" fill="url(#water)" />
          <path d="M0 145h196v51H0z" fill="#808000" />
          <path d="M0 145.500h196" stroke="#4ba0a0" />
        </g>
        <circle cx="98" cy="98" r="96.500" fill="none" stroke="#111" strokeWidth="1.200" />
      </svg>
    </Drawing>
    <PaneTabs $h={20} $bg="#f0f0f0">
      <PaneTab $on>Attribute</PaneTab>
      <PaneTab $h={15} $pad={2}>Operation</PaneTab>
    </PaneTabs>
  </Explorer>
);

const RunManager = () => (
  <Window $x={159} $y={132} $w={342}>
    <Caption $dim>
      <Icon name="runner" />
      Run Manager
      <CloseKey aria-label="Close"><Cross c="#999" /></CloseKey>
    </Caption>
    <FrameRun $m="2px 2px 0 6px" $pad="1px 2px 2px 8px">
      <legend>Output Source</legend>
      <FormRow $h={32}>
        <svg width="18" height="24" viewBox="0 0 18 24">
          <path d="M4 1h10l4 2-3 3 3 3-3 3 3 3-4 5-2 3H6l-2-3-4-5 3-3-3-3 3-3-3-3z" fill="#1c1c1c" />
          <circle cx="9" cy="5" r="3.200" fill="#a32020" />
          <circle cx="9" cy="12" r="2.800" fill="#7a6a1a" />
          <circle cx="9" cy="18.500" r="3.600" fill="#2fe06a" />
        </svg>
        <Stack>
          <FormRow>
            <FieldLabel $w={41} $pl={4} htmlFor="run-name">Name:</FieldLabel>
            <Drop $w={152}>
              <DropSelect id="run-name"><option>*Active*:Standard</option></DropSelect>
              <Down />
            </Drop>
            <Tools $pl={4}>
              <ToolIcons names={["walkLines", "docBolt", "folder", "save", "bolt", "walkRed"]} />
              <Ok>OK</Ok>
            </Tools>
          </FormRow>
          <FormRow>
            <FieldLabel $w={41} $pl={4} htmlFor="run-ref">Reference:</FieldLabel>
            <ReadOnly id="run-ref" readOnly defaultValue="BASE, Standard Hydraulic/Quality Simulation" />
            <Tools $pl={4}>
              <ToolIcons names={["docNew", "thumb", "docRed", "docRed2"]} />
            </Tools>
          </FormRow>
        </Stack>
      </FormRow>
    </FrameRun>
    <SheetTabs $ml={7}>
      <SheetTab $on><Icon name="cards" size={11} />SWMM Analysis</SheetTab>
    </SheetTabs>
    <Sheet $m="0 2px 3px 7px" $pad="1px 6px" $h={146}>
      {[
        ["Report Options:", "BASE, Base Simulation Report"],
        ["Simulation Options:", "BASE, Base Simulation Options"],
        ["Climatology Setting:", "BASE, BASE Run Climatology Settings"],
      ].map(([l, v], i) => (
        <FormRow $h={20} key={l}>
          <FieldLabel $w={83} htmlFor={`opt-${i}`}>{l}</FieldLabel>
          <Drop $w={217}>
            <DropSelect id={`opt-${i}`}><option>{v}</option></DropSelect>
            <Down />
          </Drop>
          <Dots aria-label={`Edit ${l}`}>...</Dots>
        </FormRow>
      ))}
    </Sheet>
  </Window>
);

const ReportSheet = () => (
  <Paper>
    <Line>****************</Line>
    <Line $in={9}>Node Results</Line>
    <Line>****************</Line>
    <Line $h={20} />
    <Line $in={9}>{"<<< Node 10309 >>>"}</Line>
    <Line $h={9}>{rule}</Line>
    <Results $h={20}>
      <thead>
        <tr><th /><th /><th>Inflow</th><th>Flooding</th><th>Depth</th><th>Head</th></tr>
        <tr><th>Date</th><th>Time</th><th>CFS</th><th>CFS</th><th>feet</th><th>feet</th></tr>
      </thead>
    </Results>
    <Line $h={9}>{rule}</Line>
    <Results $h={215}>
      <tbody>
        {times.map((t) => (
          <tr key={t}>
            <td>01/01/1988</td><td>{t}</td><td>0.000</td><td>0.000</td><td>0.000</td><td>101.600</td>
          </tr>
        ))}
      </tbody>
    </Results>
  </Paper>
);

const SimulationReport = () => (
  <Window $x={506} $y={121} $w={253} $front>
    <Caption>
      <Icon name="report" />
      Simulation Report
      <CloseKey aria-label="Close"><Cross /></CloseKey>
    </Caption>
    <Tools $pl={8} $h="22px">
      <ToolIcons names={["docNew", "copy", "stamp", "pencilDoc", "idPlus"]} />
      <Split />
      <ToolIcons names={["pencil", "docBlueArrow", "eraser", "save", "saveAs"]} />
      <Split />
      <Ok>OK</Ok>
      <ToolIcons names={["redArrow"]} />
    </Tools>
    <ListTable>
      <thead>
        <tr><th>ID</th><th>Description</th><th aria-label="Spare" /></tr>
      </thead>
      <tbody>
        <tr>
          <td width="72"><IdCell><Icon name="base" size={9} />BASE</IdCell></td>
          <td width="153">Base Simulation Report</td>
          <td />
        </tr>
      </tbody>
    </ListTable>
    <FrameParams $m="5px 6px 0 7px" $pad="3px 10px 5px 11px">
      <legend>Report Parameters</legend>
      <Checks>
        {["Include Input", "Report Continuity", "Report Flow Statistics", "Report Control Actions"].map((t) => (
          <CheckLabel key={t}><Tick defaultChecked />{t}</CheckLabel>
        ))}
      </Checks>
    </FrameParams>
    <SheetTabs $ml={8}>
      <SheetTab $on><Icon name="tabNode" />Nodes</SheetTab>
      <SheetTab><Icon name="tabLink" />Links</SheetTab>
      <SheetTab><Icon name="tabSub" />Subcatchments</SheetTab>
    </SheetTabs>
    <Sheet $m="0 6px 6px 7px" $pad="1px 4px" $h={154}>
      <FormRow $h={15}>
        <FieldLabel $w={98} htmlFor="report-node">Report Node:</FieldLabel>
        <Drop $w={72}>
          <DropSelect id="report-node" $hot><option>All</option></DropSelect>
          <Down />
        </Drop>
      </FormRow>
      <GridArea>
        <GridFrame>
          <NodeTable>
            <thead>
              <tr><th className="corner" aria-label="All rows" /><th className="head">Node ID</th></tr>
            </thead>
            <tbody>
              {[1, 2, 3, 4, 5, 6, 7, 8, 9].map((n) => (
                <tr key={n}>
                  <th className={n === 1 ? "now" : ""}>{n}</th>
                  <td className={n === 1 ? "now" : ""} />
                </tr>
              ))}
            </tbody>
          </NodeTable>
          <BlueBar>
            <BlueKey aria-label="Up"><svg width="5" height="3" viewBox="0 0 5 3"><path d="M0 3h5L2.500 0z" fill="#123" /></svg></BlueKey>
            <BlueThumb />
            <Fill />
            <BlueKey aria-label="Down"><svg width="5" height="3" viewBox="0 0 5 3"><path d="M0 0h5L2.500 3z" fill="#123" /></svg></BlueKey>
          </BlueBar>
        </GridFrame>
        <SideKeys>
          <SideKey disabled>Insert+</SideKey>
          <SideKey disabled>Delete</SideKey>
          <SideKey disabled $mt={11}>Clear All...</SideKey>
          <SideKey disabled>Insert Rows...</SideKey>
          <SideKey disabled>Delete Rows</SideKey>
          <SideKey disabled>Set Rows...</SideKey>
        </SideKeys>
      </GridArea>
    </Sheet>
  </Window>
);

export default function App() {
  return (
    <Page>
      <Global />
      <RibbonArea />
      <Main>
        <LegendPane />
        <MapView />
        <ModelExplorer />
      </Main>
      <Message>
        <PaneHead>
          <PaneTitle>Message</PaneTitle>
          <PinKeys />
        </PaneHead>
        <Log>
          <LogText>Updating output data...<br />Initialization Completed.</LogText>
          <VBar $w={8}>
            <Chevron dir="up" />
            <Fill />
            <Chevron />
          </VBar>
        </Log>
        <LogTabs $bg="#edf0fa">
          <PaneTab $on>Message</PaneTab>
          <PaneTab $dim>Validation</PaneTab>
          <PaneTab $dim>Profile Plot</PaneTab>
        </LogTabs>
      </Message>
      <RunManager />
      <ReportSheet />
      <SimulationReport />
      <Badge $x={391} $y={184}>1</Badge>
      <Badge $x={694} $y={276}>2</Badge>
      <Badge $x={309} $y={327}>3</Badge>
    </Page>
  );
}
